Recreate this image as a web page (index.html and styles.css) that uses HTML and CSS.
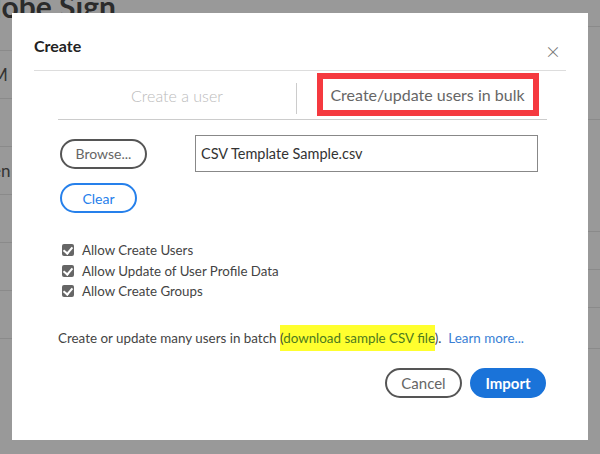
FILE: index.html
```html
<!DOCTYPE html>
<html lang="en">
<head>
    <meta charset="UTF-8">
    <meta name="viewport" content="width=device-width, initial-scale=1.0">
    <title>Create</title>
    <link rel="stylesheet" href="styles.css">
</head>
<body>
    <!-- page behind the dialog -->
    <div class="page">
        <div class="page-title">Adobe Sign</div>
        <div class="page-cols">
            <div class="side">
                <div class="side-row">M</div>
                <div class="side-row"></div>
                <div class="side-row">en</div>
                <div class="side-row"></div>
                <div class="side-row"></div>
                <div class="side-row">s</div>
                <div class="side-row tall"></div>
            </div>
            <div class="main">
                <div class="main-row r1"></div>
                <div class="main-row r2"></div>
                <div class="main-row r3"></div>
                <div class="main-row r3"></div>
                <div class="main-row r4"></div>
                <div class="main-row r4"></div>
            </div>
        </div>
    </div>

    <div class="modal">
        <div class="modal-head">
            <h1>Create</h1>
            <span class="close">&times;</span>
        </div>

        <div class="tabs">
            <div class="tab">Create a user</div>
            <div class="tab-sep"></div>
            <div class="tab active"><span class="marked">Create/update users in bulk</span></div>
        </div>

        <div class="file-row">
            <button class="btn btn-plain">Browse...</button>
            <div class="file-name">CSV Template Sample.csv</div>
        </div>
        <button class="btn btn-outline">Clear</button>

        <ul class="checks">
            <li><span class="box"></span>Allow Create Users</li>
            <li><span class="box"></span>Allow Update of User Profile Data</li>
            <li><span class="box"></span>Allow Create Groups</li>
        </ul>

        <p class="help">Create or update many users in batch <span class="hl">(<a href="#">download sample CSV file</a></span>).&nbsp; <a href="#" class="more">Learn more...</a></p>

        <div class="actions">
            <button class="btn btn-plain">Cancel</button>
            <button class="btn btn-primary">Import</button>
        </div>
    </div>
</body>
</html>
```

FILE: styles.css
```css
body {
    margin: 0;
    background-color: #999;
    font-family: Lato, "Open Sans", sans-serif;
    color: #444;
    overflow: hidden;
    height: 454px;
}

.page {
    height: 454px;
}
.page-title {
    font-size: 30px;
    font-weight: bold;
    color: #2b2b2b;
    margin-left: -36px;
    line-height: 40px;
    margin-top: -14px;
}
.page-cols {
    display: flex;
}
.side {
    width: 78px;
    border-right: 1px solid #8e8e8e;
    padding-top: 24px;
}
.side-row {
    height: 47px;
    border-top: 1px solid #8a8a8a;
    font-size: 17px;
    color: #333;
    line-height: 47px;
    margin-left: -8px;
}
.side-row.tall {
    height: 95px;
}
.main {
    flex: 1;
}
.main-row {
    border-top: 1px solid #8a8a8a;
}
.r1 { height: 92px; }
.r2 { height: 111px; }
.r3 { height: 37px; }
.r4 { height: 40px; }

.modal {
    position: absolute;
    left: 12px;
    top: 13px;
    width: 532px;
    height: 427px;
    padding: 0 22px;
    background: #fff;
    box-sizing: content-box;
}

.modal-head {
    display: flex;
    justify-content: space-between;
    align-items: center;
    height: 57px;
    border-bottom: 1px solid #ddd;
}
.modal-head h1 {
    margin: 0;
    font-size: 16px;
    font-weight: bold;
    color: #222;
    padding-top: 8px;
}
.close {
    font-size: 24px;
    color: #777;
    font-weight: 300;
    margin-right: 6px;
    margin-top: 18px;
}

.tabs {
    display: flex;
    align-items: center;
    margin: 0 19px 0 24px;
    height: 48px;
    border-bottom: 1px solid #ccc;
}
.tab {
    flex: 1;
    text-align: center;
    font-size: 16px;
    color: #bbb;
    font-weight: 300;
}
.tab-sep {
    width: 1px;
    height: 31px;
    background: #ccc;
    margin-top: 6px;
}
.tab.active {
    color: #666;
    font-weight: normal;
    padding-left: 12px;
}
.marked {
    display: inline-block;
    border: 6px solid #f5393f;
    padding: 6px 8px 6px 7px;
    margin-top: -2px;
}

.btn {
    font-family: inherit;
    font-size: 14px;
    border-radius: 16px;
    background: #fff;
    cursor: pointer;
}
.btn-plain {
    border: 2px solid #555;
    color: #666;
    width: 87px;
    height: 30px;
}
.btn-outline {
    border: 2px solid #2680eb;
    color: #2680eb;
    width: 77px;
    height: 30px;
    margin-left: 26px;
    margin-top: 11px;
    display: block;
}
.btn-primary {
    border: 2px solid #1a73d9;
    background: #1a73d9;
    color: #fff;
    font-weight: bold;
    font-size: 15px;
    width: 76px;
    height: 30px;
    margin-left: 8px;
}

.file-row {
    display: flex;
    align-items: center;
    margin: 15px 28px 0 26px;
}
.file-row .btn-plain {
    height: 30px;
}
.file-name {
    flex: 1;
    margin-left: 48px;
    height: 35px;
    border: 1px solid #888;
    font-size: 14.5px;
    color: #333;
    line-height: 35px;
    padding-left: 5px;
}

.checks {
    list-style: none;
    margin: 27px 0 0 28px;
    padding: 0;
}
.checks li {
    display: flex;
    align-items: center;
    font-size: 13.3px;
    color: #444;
    height: 20.5px;
}
.box {
    width: 12px;
    height: 12px;
    background: #666;
    border-radius: 2px;
    margin-right: 8px;
    position: relative;
}
.box::after {
    content: "";
    position: absolute;
    left: 3px;
    top: 1px;
    width: 4px;
    height: 7px;
    border: solid #fff;
    border-width: 0 2px 2px 0;
    transform: rotate(40deg);
}

.help {
    margin: 28px 0 0 24px;
    font-size: 13.4px;
    color: #444;
}
.help a {
    text-decoration: none;
    color: #2680eb;
}
.hl {
    background: #ffff2e;
    padding: 5px 0 5px;
}
.hl a {
    color: #4d7a1e;
}
.help a.more {
    color: #3a7fd5;
}

.actions {
    display: flex;
    justify-content: flex-end;
    margin: 22px 20px 0 0;
}
.actions .btn-plain {
    width: 77px;
    height: 30px;
    font-size: 15px;
}
```
